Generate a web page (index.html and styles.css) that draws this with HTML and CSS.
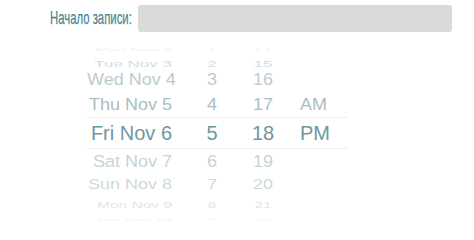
FILE: index.html
```html
<!DOCTYPE html>
<html lang="ru">
<head>
<meta charset="utf-8">
<link rel="stylesheet" href="styles.css">
</head>
<body>
<div class="form-row">
  <label class="label"><span class="label-text">Начало записи:</span></label>
  <div class="input"></div>
</div>
<div class="picker">
  <div class="row r-f1"><span class="c-date">Mon Nov 2</span><span class="c-h">1</span><span class="c-m">14</span><span class="c-ap"></span></div>
  <div class="row r-tue"><span class="c-date">Tue Nov 3</span><span class="c-h">2</span><span class="c-m">15</span><span class="c-ap"></span></div>
  <div class="row r-wed"><span class="c-date">Wed Nov 4</span><span class="c-h">3</span><span class="c-m">16</span><span class="c-ap"></span></div>
  <div class="row r-thu"><span class="c-date">Thu Nov 5</span><span class="c-h">4</span><span class="c-m">17</span><span class="c-ap">AM</span></div>
  <div class="row r-fri"><span class="c-date">Fri Nov 6</span><span class="c-h">5</span><span class="c-m">18</span><span class="c-ap">PM</span></div>
  <div class="row r-sat"><span class="c-date">Sat Nov 7</span><span class="c-h">6</span><span class="c-m">19</span><span class="c-ap"></span></div>
  <div class="row r-sun"><span class="c-date">Sun Nov 8</span><span class="c-h">7</span><span class="c-m">20</span><span class="c-ap"></span></div>
  <div class="row r-mon"><span class="c-date">Mon Nov 9</span><span class="c-h">8</span><span class="c-m">21</span><span class="c-ap"></span></div>
  <div class="row r-f2"><span class="c-date">Tue Nov 10</span><span class="c-h">9</span><span class="c-m">22</span><span class="c-ap"></span></div>
</div>
</body>
</html>
```
FILE: styles.css
```css
html, body {
  margin: 0;
  padding: 0;
  background: #ffffff;
}
body {
  width: 474px;
  height: 233px;
  overflow: hidden;
  font-family: "Liberation Sans", Arial, sans-serif;
}
.form-row {
  display: flex;
  align-items: center;
  padding: 5px 0 0 50px;
  height: 27px;
}
.label {
  width: 88px;
  flex: none;
  white-space: nowrap;
  overflow: visible;
}
.label-text {
  display: inline-block;
  font-family: "Liberation Sans", sans-serif;
  font-size: 18px;
  color: #4a8595;
  transform: scaleX(0.63);
  transform-origin: left center;
  -webkit-text-stroke: 0.25px #4a8595;
}
.input {
  width: 314px;
  height: 27px;
  background: #d9dada;
  border-radius: 3px;
}
.picker {
  margin: 9px 0 0 87px;
  width: 260px;
}
.row {
  display: grid;
  grid-template-columns: 85px 80px 22px 1fr;
  align-items: center;
  white-space: nowrap;
}
.row span {
  display: block;
}
.c-date { text-align: right; }
.c-h { text-align: center; }
.c-m { text-align: center; }
.c-ap { padding-left: 26px; }

.r-f1 { height: 13px; font-size: 16px; color: #eef2f3; }
.r-f1 span { transform: scaleY(0.25); }
.r-tue { height: 15px; font-size: 17px; color: #d3dcdf; }
.r-tue span { transform: scaleY(0.57); }
.r-wed { height: 22px; font-size: 18px; color: #bccbd0; }
.r-wed span { transform: scaleY(0.9); }
.r-thu { height: 26px; font-size: 18px; color: #aabdc3; }
.r-thu span { transform: scaleY(0.93); }
.r-fri {
  height: 30px;
  font-size: 20px;
  color: #6c97a3;
  border-top: 1px solid #eaf0f2;
  border-bottom: 1px solid #eaf0f2;
}
.r-sat { height: 24px; font-size: 18px; color: #c6d4d8; }
.r-sat span { transform: scaleY(0.94); }
.r-sun { height: 23px; font-size: 18px; color: #cfdadd; }
.r-sun span { transform: scaleY(0.86); }
.r-mon { height: 15px; font-size: 15.5px; color: #e0e7e9; }
.r-mon span { transform: scaleY(0.55); }
.r-f2 { height: 8px; font-size: 15px; color: #f1f4f5; }
.r-f2 span { transform: scaleY(0.25); }
```
